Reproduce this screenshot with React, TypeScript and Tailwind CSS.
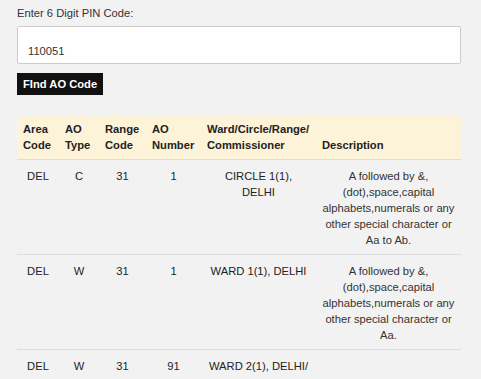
const rows = [
  {
    area: 'DEL',
    type: 'C',
    range: '31',
    number: '1',
    ward: 'CIRCLE 1(1), DELHI',
    desc: 'A followed by &, (dot),space,capital alphabets,numerals or any other special character or Aa to Ab.',
  },
  {
    area: 'DEL',
    type: 'W',
    range: '31',
    number: '1',
    ward: 'WARD 1(1), DELHI',
    desc: 'A followed by &, (dot),space,capital alphabets,numerals or any other special character or Aa.',
  },
  {
    area: 'DEL',
    type: 'W',
    range: '31',
    number: '91',
    ward: 'WARD 2(1), DELHI/',
    desc: '',
  },
];

export default function App() {
  return (
    <div
      className="min-h-[379px] w-[481px] overflow-hidden bg-[#f2f2f2] px-[17px] pt-[5px] text-[11.2px] leading-[16px] text-[#333]"
      style={{ fontFamily: '"Liberation Sans", Arial, sans-serif' }}
    >
      <label className="block">Enter 6 Digit PIN Code:</label>
      <input
        type="text"
        defaultValue="110051"
        className="mt-[5px] block h-[38px] w-[444px] rounded-[2px] border border-[#cccccc] bg-white px-[10px] pt-[12px] text-[11.2px] text-[#333] outline-none"
      />
      <button className="mt-[9px] block h-[22px] bg-[#111111] px-[6px] text-[11.2px] font-bold text-white">
        FInd AO Code
      </button>

      <table className="mt-[20px] w-[444px] table-fixed border-collapse">
        <colgroup>
          <col className="w-[42px]" />
          <col className="w-[40px]" />
          <col className="w-[47px]" />
          <col className="w-[55px]" />
          <col className="w-[115px]" />
          <col className="w-[145px]" />
        </colgroup>
        <thead>
          <tr className="bg-[#fdf3d8] text-left align-bottom font-bold text-[#222]">
            <th className="px-[6px] py-[6px]">Area<br />Code</th>
            <th className="px-[6px] py-[6px]">AO<br />Type</th>
            <th className="px-[6px] py-[6px]">Range<br />Code</th>
            <th className="px-[6px] py-[6px]">AO<br />Number</th>
            <th className="whitespace-nowrap px-[6px] py-[6px]">Ward/Circle/Range/<br />Commissioner</th>
            <th className="px-[6px] py-[6px]">Description</th>
          </tr>
        </thead>
        <tbody>
          {rows.map((r, i) => (
            <tr key={i} className="border-t border-b border-[#dddddd] text-center align-top text-[#222]">
              <td className="px-[6px] pt-[8px] pb-[6px]">{r.area}</td>
              <td className="px-[6px] pt-[8px] pb-[6px]">{r.type}</td>
              <td className="px-[6px] pt-[8px] pb-[6px]">{r.range}</td>
              <td className="px-[6px] pt-[8px] pb-[6px]">{r.number}</td>
              <td className="px-[6px] pt-[8px] pb-[6px]">{r.ward}</td>
              <td className="px-[6px] pt-[8px] pb-[6px] text-[#333]">{r.desc}</td>
            </tr>
          ))}
        </tbody>
      </table>
    </div>
  );
}
